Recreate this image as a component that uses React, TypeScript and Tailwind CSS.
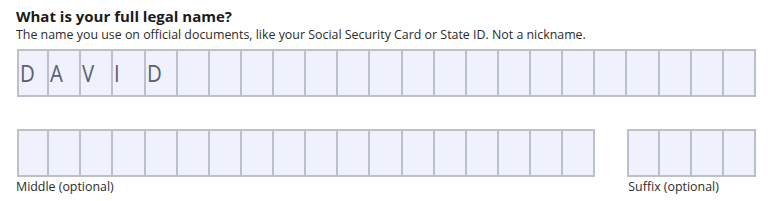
import React from "react";

const FIRST = ["D", "A", "V", "I", "D"];

function Cell({ ch, first }: { ch?: string; first?: boolean }) {
  return (
    <div
      className={
        "h-[48px] bg-[#eff2fd] border-y-2 border-r-2 border-[#bcc0ca] pl-[1px] overflow-hidden " +
        (first ? "border-l-2" : "")
      }
    >
      {ch ? (
        <span
          className="inline-block origin-left scale-x-[0.85] text-[24px] leading-[44px] font-normal text-[#5b6070]"
          style={{ fontFamily: "'Open Sans', sans-serif" }}
        >
          {ch}
        </span>
      ) : null}
    </div>
  );
}

export default function App() {
  const row1 = Array.from({ length: 23 }, (_, i) => FIRST[i]);
  const mid = Array.from({ length: 18 });
  const suf = Array.from({ length: 4 });
  return (
    <div
      className="w-[768px] h-[201px] bg-white overflow-hidden text-[#1b1b1b]"
      style={{ fontFamily: "'Open Sans', sans-serif" }}
    >
      <h1 className="pl-4 pt-[6px] text-[15px] leading-[20px] font-bold">
        What is your full legal name?
      </h1>
      <p className="pl-4 text-[12.4px] leading-[17px] text-[#2b2b2b]">
        The name you use on official documents, like your Social Security Card or State ID. Not a nickname.
      </p>
      <div className="ml-[17px] w-[739px] mt-[6px] grid grid-cols-[repeat(23,minmax(0,1fr))]">
        {row1.map((ch, i) => (
          <Cell key={i} ch={ch} first={i === 0} />
        ))}
      </div>
      <div className="ml-[17px] w-[739px] mt-[32px] grid grid-cols-[repeat(23,minmax(0,1fr))]">
        {mid.map((_, i) => (
          <Cell key={i} first={i === 0} />
        ))}
        <div />
        {suf.map((_, i) => (
          <Cell key={"s" + i} first={i === 0} />
        ))}
      </div>
      <div className="ml-4 w-[740px] mt-[2px] grid grid-cols-[repeat(23,minmax(0,1fr))] text-[12.4px] leading-[16px] text-[#2b2b2b]">
        <div className="col-span-18">Middle (optional)</div>
        <div className="col-start-20 col-span-4 pl-[1px]">Suffix (optional)</div>
      </div>
    </div>
  );
}
